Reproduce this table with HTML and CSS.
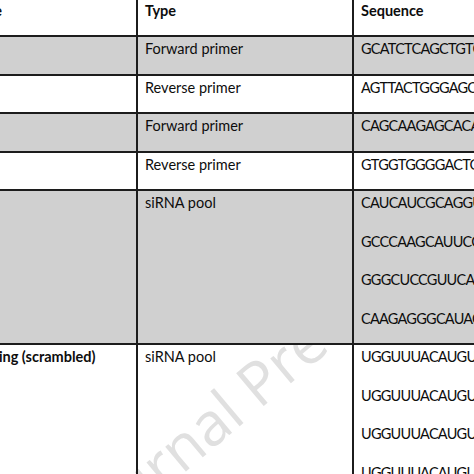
FILE: index.html
```html
<!DOCTYPE html>
<html lang="en">
<head>
<meta charset="utf-8">
<title>Primer and siRNA sequences</title>
<link rel="stylesheet" href="styles.css">
</head>
<body>
<div class="frame">
  <div class="watermark">Journal Pre-proof</div>
  <table class="seq-table">
    <colgroup>
      <col class="c-gene">
      <col class="c-type">
      <col class="c-seq">
    </colgroup>
    <tr class="head">
      <th>Target gene</th>
      <th>Type</th>
      <th>Sequence</th>
    </tr>
    <tr class="gray">
      <td>Ctgf</td>
      <td>Forward primer</td>
      <td class="seq">GCATCTCAGCTGTCCTGCTAC</td>
    </tr>
    <tr>
      <td></td>
      <td>Reverse primer</td>
      <td class="seq">AGTTACTGGGAGCTGATGCTG</td>
    </tr>
    <tr class="gray">
      <td>Gapdh</td>
      <td>Forward primer</td>
      <td class="seq">CAGCAAGAGCACAAGAGGAAG</td>
    </tr>
    <tr>
      <td></td>
      <td>Reverse primer</td>
      <td class="seq">GTGGTGGGGACTGAGTGTGGC</td>
    </tr>
    <tr class="gray">
      <td>Yap</td>
      <td>siRNA pool</td>
      <td class="seq">
        <div class="seqs">
          <div>CAUCAUCGCAGGUGUCAUC</div>
          <div>GCCCAAGCAUUCCGCAUAA</div>
          <div>GGGCUCCGUUCAGCUGAAA</div>
          <div>CAAGAGGGCAUACAUAGCA</div>
        </div>
      </td>
    </tr>
    <tr>
      <td class="bold">Non-targeting (scrambled)</td>
      <td>siRNA pool</td>
      <td class="seq">
        <div class="seqs">
          <div>UGGUUUACAUGUCGACUAA</div>
          <div>UGGUUUACAUGUUGUGUGA</div>
          <div>UGGUUUACAUGUUUUCUGA</div>
          <div>UGGUUUACAUGUUUUCCUA</div>
        </div>
      </td>
    </tr>
  </table>
</div>
</body>
</html>
```
FILE: styles.css
```css
html, body {
  margin: 0;
  padding: 0;
  background: #ffffff;
}

body {
  font-family: Lato, "Open Sans", "Liberation Sans", sans-serif;
  color: #0d0d0d;
}

.frame {
  position: relative;
  width: 474px;
  height: 474px;
  overflow: hidden;
}

.watermark {
  position: absolute;
  left: 61px;
  top: 507px;
  font-family: "Open Sans", "Liberation Sans", sans-serif;
  font-size: 60px;
  line-height: 1;
  color: #e0e0e0;
  white-space: nowrap;
  transform: rotate(-40deg);
  transform-origin: 0 0;
  z-index: 0;
}

.seq-table {
  position: relative;
  z-index: 1;
  border-collapse: collapse;
  margin-left: -82px;
  margin-top: -6px;
  font-size: 14.5px;
  line-height: 17px;
  table-layout: fixed;
  width: 720px;
}

.c-gene { width: 218px; }
.c-type { width: 216px; }
.c-seq { width: 286px; }

.seq-table th,
.seq-table td {
  border: 2px solid #1c1c1c;
  padding: 3px 7px 16.5px;
  vertical-align: top;
  text-align: left;
  white-space: nowrap;
}

.seq-table th {
  font-weight: 700;
  padding-top: 6px;
  padding-bottom: 16px;
}

.seq-table tr.gray td {
  background: #d0d0d0;
}

.seq-table td.seq {
  letter-spacing: -0.75px;
}

.bold {
  font-weight: 700;
}

.seqs {
  display: flex;
  flex-direction: column;
  gap: 21.5px;
}
```
